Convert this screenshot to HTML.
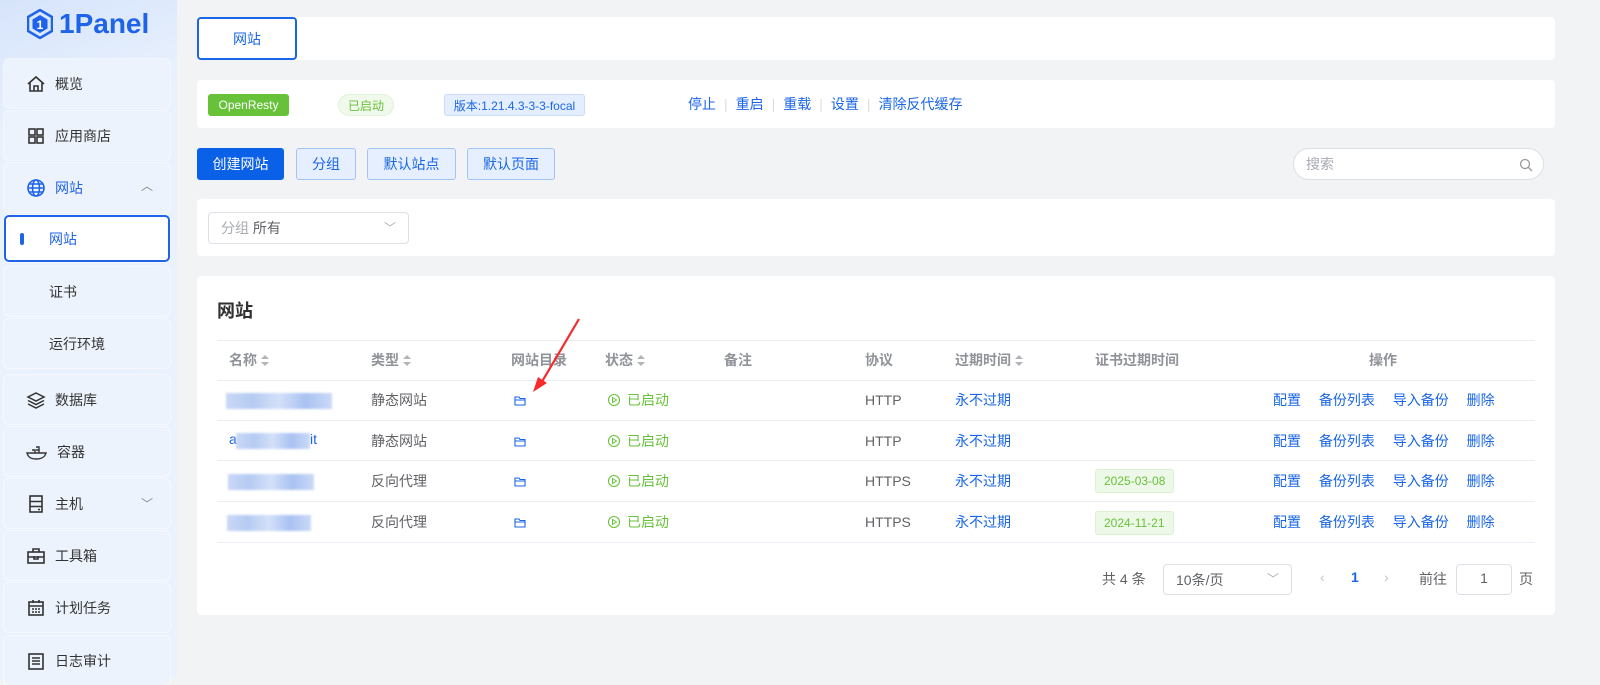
<!DOCTYPE html>
<html><head><meta charset="utf-8"><style>
*{box-sizing:border-box;margin:0;padding:0}
body{width:1600px;height:678px;overflow:hidden;background:#f2f3f5;font-family:"Liberation Sans","Noto Sans CJK SC",sans-serif;font-size:14px;color:#303133;position:relative}
.side{position:absolute;left:0;top:0;width:177px;height:678px;background:linear-gradient(160deg,#d6e4fb 0%,#e9f1fd 20%,#ebf2fe 100%)}
.logo{position:absolute;left:27px;top:8px;font-size:28px;font-weight:bold;color:#1f63e8;display:flex;align-items:center;gap:6px}
.mi{position:absolute;left:4px;width:166px;height:49px;background:#edf3fd;border-radius:5px;display:flex;align-items:center;padding-left:22px;color:#333;font-size:14px;box-shadow:0 0 0 1px rgba(255,255,255,.5)}
.mi svg{margin-right:9px}
.mi.sub{padding-left:45px}
.mi.act{background:#fff;border:2px solid #1f63e8;color:#1f63e8;padding-left:43px}
.card{position:absolute;left:197px;width:1358px;background:#fff;border-radius:4px}
.blue{color:#1a66e6}
.btn{position:absolute;top:148px;height:32px;border:1px solid #a3c2f5;background:#e6efff;color:#1a66e6;border-radius:3px;display:flex;align-items:center;justify-content:center;font-size:14px}
.th{position:absolute;top:350px;color:#909399;font-weight:bold;font-size:14px}
.td{position:absolute;font-size:14px}
.line{position:absolute;left:217px;width:1318px;height:1px;background:#ebeef5}
.arr{display:inline-block;vertical-align:middle;margin-left:4px;width:8px;height:12px;position:relative}
.arr:before{content:"";position:absolute;left:0;top:0;border:4px solid transparent;border-bottom-color:#b0b3b8;border-top:0}
.arr:after{content:"";position:absolute;left:0;top:7px;border:4px solid transparent;border-top-color:#b0b3b8;border-bottom:0}
.blur{position:absolute;height:16px;background:linear-gradient(90deg,#c9d8f6,#b5cbf3,#d4e0f8,#a9c2f2,#cbd9f7);filter:blur(1px)}
.tag{position:absolute;height:24px;background:#eef8e9;border:1px solid #dcf0d2;color:#67c23a;border-radius:3px;font-size:12px;display:flex;align-items:center;padding:0 8px}
</style></head><body>
<div class="side">
<div class="logo"><svg width="26" height="30" viewBox="0 0 26 30"><path d="M13 1 L25 8 V22 L13 29 L1 22 V8Z" fill="none" stroke="#1f63e8" stroke-width="2.5"/><path d="M13 6 L20.5 10.5 V19.5 L13 24 L5.5 19.5 V10.5Z" fill="#1f63e8"/><text x="13" y="20" font-size="12" fill="#fff" text-anchor="middle" font-weight="bold" font-family="Liberation Sans">1</text></svg>1Panel</div>
<div class="mi" style="top:59px"><svg width="20" height="18" viewBox="0 0 20 18"><path d="M2 9 L10 2 L18 9 M4 8 V16 H16 V8 M8 16 V11 H12 V16" fill="none" stroke="#333" stroke-width="1.6"/></svg>概览</div>
<div class="mi" style="top:111px"><svg width="20" height="18" viewBox="0 0 20 18"><g fill="none" stroke="#333" stroke-width="1.6"><rect x="3" y="2" width="6" height="6"/><rect x="11" y="2" width="6" height="6"/><rect x="3" y="10" width="6" height="6"/><rect x="11" y="10" width="6" height="6"/></g></svg>应用商店</div>
<div class="mi" style="top:163px;color:#1f63e8"><svg width="20" height="20" viewBox="0 0 20 20"><g fill="none" stroke="#1f63e8" stroke-width="1.6"><circle cx="10" cy="10" r="8"/><ellipse cx="10" cy="10" rx="3.5" ry="8"/><path d="M2 10 H18 M3.5 6 H16.5 M3.5 14 H16.5"/></g></svg>网站<span style="position:absolute;left:137px;top:14px;font-size:12px;color:#888">︿</span></div>
<div class="mi act" style="top:215px;height:47px"><span style="position:absolute;left:14px;top:16px;width:4px;height:12px;background:#1f63e8;border-radius:2px"></span>网站</div>
<div class="mi sub" style="top:267px">证书</div>
<div class="mi sub" style="top:319px">运行环境</div>
<div class="mi" style="top:375px"><svg width="20" height="18" viewBox="0 0 20 18"><path d="M10 2 L18 6 L10 10 L2 6Z M2 9.5 L10 13.5 L18 9.5 M2 13 L10 17 L18 13" fill="none" stroke="#333" stroke-width="1.5"/></svg>数据库</div>
<div class="mi" style="top:427px"><svg width="22" height="18" viewBox="0 0 22 18"><path d="M1 10 H20 C19 14 15 16 10 16 C5 16 2 14 1 10Z M6 7h3v3 M10 7h3v3 M10 4h3v3" fill="none" stroke="#333" stroke-width="1.4"/></svg>容器</div>
<div class="mi" style="top:479px"><svg width="20" height="18" viewBox="0 0 20 18"><g fill="none" stroke="#333" stroke-width="1.6"><rect x="4" y="1" width="12" height="16"/><path d="M4 6.5 H16 M4 11.5 H16 M12 14.5h2"/></g></svg>主机<span style="position:absolute;left:137px;top:16px;font-size:12px;color:#888">﹀</span></div>
<div class="mi" style="top:531px"><svg width="20" height="18" viewBox="0 0 20 18"><g fill="none" stroke="#333" stroke-width="1.6"><rect x="2" y="5" width="16" height="11"/><path d="M7 5 V2 H13 V5 M2 10 H18 M8 9 V12 H12 V9"/></g></svg>工具箱</div>
<div class="mi" style="top:583px"><svg width="20" height="18" viewBox="0 0 20 18"><g fill="none" stroke="#333" stroke-width="1.6"><rect x="3" y="3" width="14" height="13"/><path d="M3 7 H17 M7 1v3 M13 1v3 M6 10h2 M9 10h2 M12 10h2 M6 13h2 M9 13h2 M12 13h2"/></g></svg>计划任务</div>
<div class="mi" style="top:636px"><svg width="20" height="18" viewBox="0 0 20 18"><g fill="none" stroke="#333" stroke-width="1.6"><rect x="3" y="2" width="14" height="15"/><path d="M6 6h8 M6 9h8 M6 12h8"/></g></svg>日志审计</div>
</div>

<div class="card" style="top:17px;height:43px">
<div style="position:absolute;left:0;top:0;width:100px;height:43px;border:2px solid #1a66e6;border-radius:4px;display:flex;align-items:center;justify-content:center;color:#1a66e6">网站</div></div>

<div class="card" style="top:80px;height:48px">
<div style="position:absolute;left:11px;top:14px;width:81px;height:22px;background:#67c23a;color:#fff;border-radius:3px;font-size:12px;display:flex;align-items:center;justify-content:center">OpenResty</div>
<div style="position:absolute;left:141px;top:14px;width:56px;height:22px;background:#f0f9eb;border:1px solid #e1f3d8;color:#67c23a;border-radius:11px;font-size:12px;display:flex;align-items:center;justify-content:center">已启动</div>
<div style="position:absolute;left:247px;top:14px;width:141px;height:22px;background:#e4eefe;border:1px solid #c9dcfc;color:#1a66e6;border-radius:3px;font-size:12px;display:flex;align-items:center;justify-content:center">版本:1.21.4.3-3-3-focal</div>
<div style="position:absolute;left:491px;top:14px;color:#1a66e6;font-size:14px;word-spacing:0">停止<span style="color:#ddd;margin:0 8px">|</span>重启<span style="color:#ddd;margin:0 8px">|</span>重载<span style="color:#ddd;margin:0 8px">|</span>设置<span style="color:#ddd;margin:0 8px">|</span>清除反代缓存</div>
</div>

<div class="btn" style="left:197px;width:87px;background:#0b60e8;border-color:#0b60e8;color:#fff">创建网站</div>
<div class="btn" style="left:296px;width:60px">分组</div>
<div class="btn" style="left:367px;width:89px">默认站点</div>
<div class="btn" style="left:467px;width:88px">默认页面</div>
<div style="position:absolute;left:1293px;top:148px;width:251px;height:32px;background:#fff;border:1px solid #dcdfe6;border-radius:16px;color:#a8abb2;padding:5px 12px;font-size:14px">搜索<svg style="position:absolute;right:10px;top:9px" width="14" height="14" viewBox="0 0 14 14"><circle cx="6" cy="6" r="4.5" fill="none" stroke="#999" stroke-width="1.3"/><path d="M9.5 9.5 L13 13" stroke="#999" stroke-width="1.3"/></svg></div>

<div class="card" style="top:199px;height:57px">
<div style="position:absolute;left:11px;top:13px;width:201px;height:32px;border:1px solid #dcdfe6;border-radius:4px;padding:5px 12px"><span style="color:#a8abb2">分组</span> <span style="color:#606266">所有</span><span style="position:absolute;right:12px;top:6px;color:#a8abb2;font-size:12px">﹀</span></div>
</div>

<div class="card" style="top:276px;height:339px"></div>
<div style="position:absolute;left:217px;top:297px;font-size:18px;font-weight:bold;color:#303133">网站</div>
<div class="line" style="top:340px"></div>
<div class="th" style="left:229px">名称<span class="arr"></span></div>
<div class="th" style="left:371px">类型<span class="arr"></span></div>
<div class="th" style="left:511px">网站目录</div>
<div class="th" style="left:605px">状态<span class="arr"></span></div>
<div class="th" style="left:724px">备注</div>
<div class="th" style="left:865px">协议</div>
<div class="th" style="left:955px">过期时间<span class="arr"></span></div>
<div class="th" style="left:1095px">证书过期时间</div>
<div class="th" style="left:1369px">操作</div>
<div class="line" style="top:380px"></div>
<div class="line" style="top:420px"></div>
<div class="line" style="top:460px"></div>
<div class="line" style="top:501px"></div>
<div class="line" style="top:542px"></div>

<div class="blur" style="left:226px;top:393px;width:106px"></div>
<div class="td blue" style="left:229px;top:431px">a</div><div class="blur" style="left:236px;top:433px;width:74px"></div><div class="td blue" style="left:310px;top:431px">it</div>
<div class="blur" style="left:228px;top:474px;width:86px"></div>
<div class="blur" style="left:227px;top:515px;width:84px"></div>

<svg style="position:absolute;left:0;top:0" width="1600" height="678">
<defs><g id="fold"><path d="M0 2 H4 L5 3.5 H10 V10 H0Z M0 5 H10" fill="none" stroke="#1a66e6" stroke-width="1.1"/></g>
<g id="play"><circle cx="6" cy="6" r="5.5" fill="none" stroke="#67c23a" stroke-width="1.1"/><path d="M4.5 3.5 L8.5 6 L4.5 8.5Z" fill="none" stroke="#67c23a" stroke-width="1"/></g></defs>
<use href="#fold" x="515" y="395"/><use href="#fold" x="515" y="436"/><use href="#fold" x="515" y="476"/><use href="#fold" x="515" y="517"/>
<use href="#play" x="608" y="394"/><use href="#play" x="608" y="435"/><use href="#play" x="608" y="475"/><use href="#play" x="608" y="516"/>
<path d="M579 319 L540 385" stroke="#f52a2a" stroke-width="2.2"/><path d="M533 392 L538 377 L547 383Z" fill="#f52a2a"/>
</svg>

<div class="td" style="left:371px;top:390px;color:#606266">静态网站</div>
<div class="td" style="left:371px;top:431px;color:#606266">静态网站</div>
<div class="td" style="left:371px;top:471px;color:#606266">反向代理</div>
<div class="td" style="left:371px;top:512px;color:#606266">反向代理</div>
<div class="td" style="left:627px;top:390px;color:#67c23a">已启动</div>
<div class="td" style="left:627px;top:431px;color:#67c23a">已启动</div>
<div class="td" style="left:627px;top:471px;color:#67c23a">已启动</div>
<div class="td" style="left:627px;top:512px;color:#67c23a">已启动</div>
<div class="td" style="left:865px;top:392px;color:#606266">HTTP</div>
<div class="td" style="left:865px;top:433px;color:#606266">HTTP</div>
<div class="td" style="left:865px;top:473px;color:#606266">HTTPS</div>
<div class="td" style="left:865px;top:514px;color:#606266">HTTPS</div>
<div class="td blue" style="left:955px;top:390px">永不过期</div>
<div class="td blue" style="left:955px;top:431px">永不过期</div>
<div class="td blue" style="left:955px;top:471px">永不过期</div>
<div class="td blue" style="left:955px;top:512px">永不过期</div>
<div class="tag" style="left:1095px;top:469px">2025-03-08</div>
<div class="tag" style="left:1095px;top:511px">2024-11-21</div>
<div class="td blue" style="left:1273px;top:390px;word-spacing:14px">配置 备份列表 导入备份 删除</div>
<div class="td blue" style="left:1273px;top:431px;word-spacing:14px">配置 备份列表 导入备份 删除</div>
<div class="td blue" style="left:1273px;top:471px;word-spacing:14px">配置 备份列表 导入备份 删除</div>
<div class="td blue" style="left:1273px;top:512px;word-spacing:14px">配置 备份列表 导入备份 删除</div>

<div class="td" style="left:1102px;top:569px;color:#606266">共 4 条</div>
<div style="position:absolute;left:1163px;top:564px;width:129px;height:31px;border:1px solid #dcdfe6;border-radius:4px;padding:5px 12px;color:#606266">10条/页<span style="position:absolute;right:12px;top:5px;color:#a8abb2;font-size:12px">﹀</span></div>
<div class="td" style="left:1320px;top:569px;color:#c0c4cc">‹</div>
<div class="td blue" style="left:1351px;top:569px;font-weight:bold">1</div>
<div class="td" style="left:1384px;top:569px;color:#c0c4cc">›</div>
<div class="td" style="left:1419px;top:569px;color:#606266">前往</div>
<div style="position:absolute;left:1456px;top:564px;width:56px;height:31px;border:1px solid #dcdfe6;border-radius:4px;text-align:center;padding-top:5px;color:#606266">1</div>
<div class="td" style="left:1519px;top:569px;color:#606266">页</div>
</body></html>
